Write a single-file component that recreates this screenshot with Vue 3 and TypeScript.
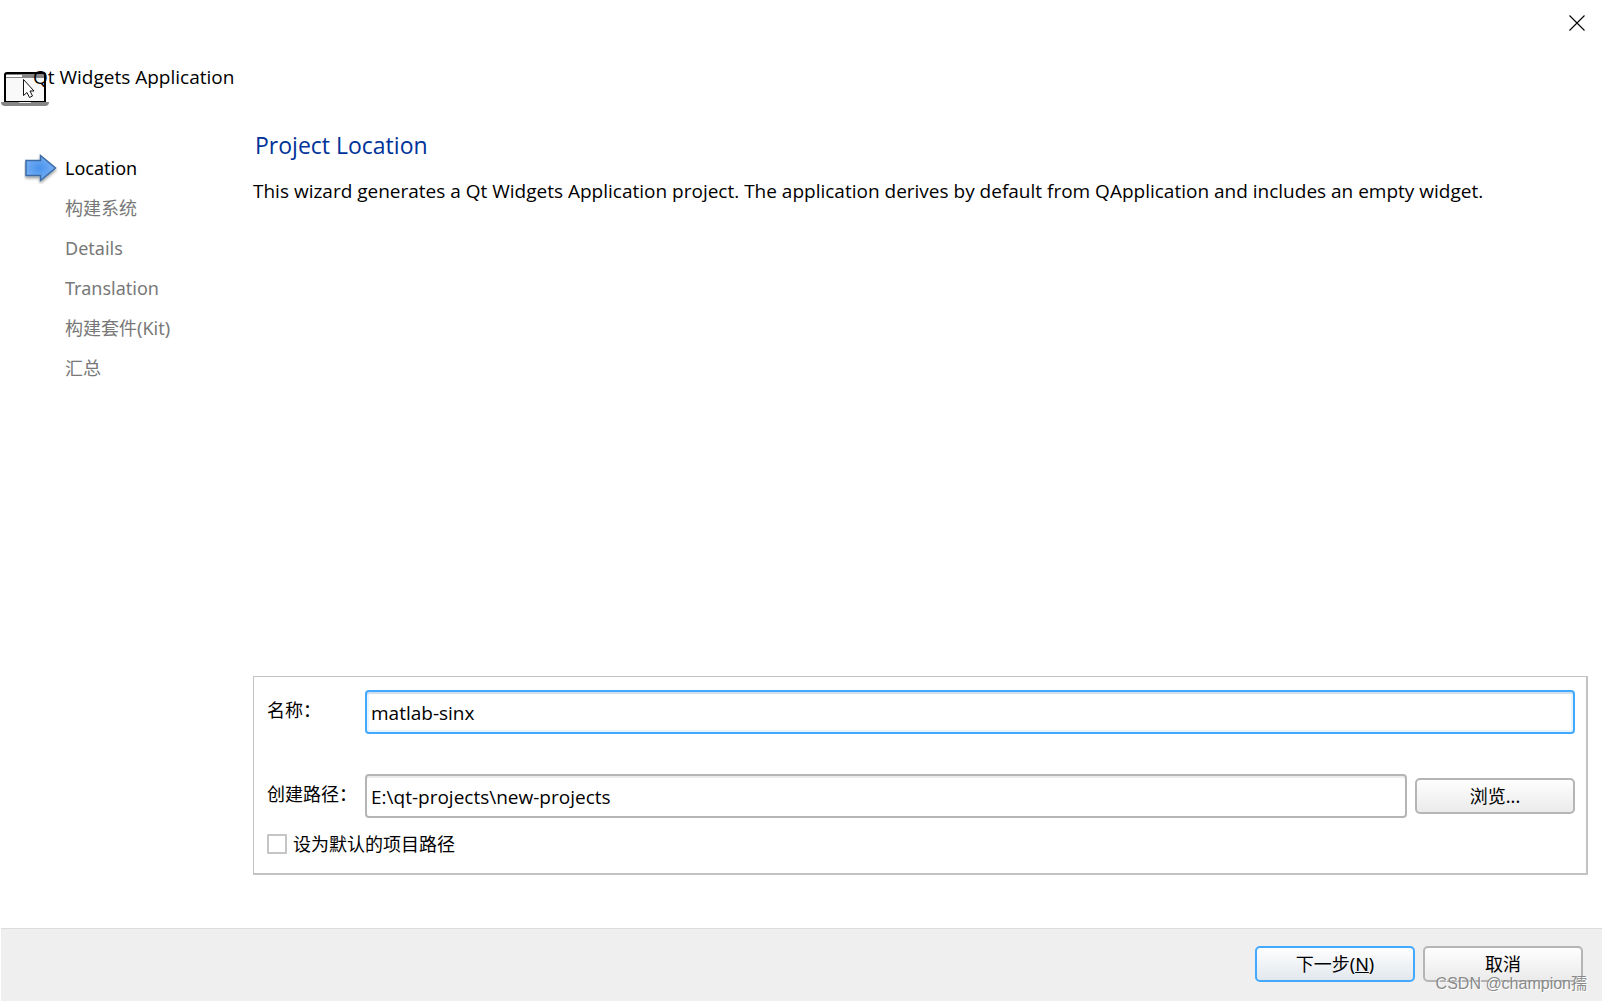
<script setup lang="ts">
import { ref } from 'vue'

const steps: string[] = ['Location', '构建系统', 'Details', 'Translation', '构建套件(Kit)', '汇总']
const currentStep = ref(0)
const projectName = ref('matlab-sinx')
const projectPath = ref('E:\\qt-projects\\new-projects')
const useAsDefault = ref(false)
</script>

<template>
  <form class="wizard" @submit.prevent>
    <header class="titlebar">
      <div class="brand">
        <svg class="brand-icon" width="48" height="34" viewBox="0 0 48 34" aria-hidden="true">
          <rect x="3" y="1" width="42" height="30" rx="2" fill="#f9f9f9" />
          <rect x="4" y="2" width="40" height="4" fill="#868686" />
          <rect x="5" y="3" width="16" height="2" fill="#fff" />
          <path d="M4 30V3q0-2 2-2h36q2 0 2 2v27" fill="none" stroke="#000" stroke-width="2" />
          <path d="M0 30h18l1 1h10l1-1h18q0 4-4 4H4q-4 0-4-4z" fill="#868686" />
          <path d="M18 30h12l-1 1H19z" fill="#eee" />
          <path d="M3 29.500h42" stroke="#000" />
          <path d="M22.500 7.500v16l3.500-3 2.500 5 3-1.500-2.500-5h4z" fill="#fff" stroke="#111" stroke-width="1" />
        </svg>
        <h1 class="app-title latin">Qt Widgets Application</h1>
      </div>
      <button class="close" type="button" aria-label="Close">
        <svg width="16" height="16" viewBox="0 0 16 16" aria-hidden="true">
          <path d="M.5.5l15 15M15.500.5l-15 15" stroke="#000" stroke-width="1.100" />
        </svg>
      </button>
    </header>

    <div class="body">
      <ol class="steps">
        <li v-for="(step, i) in steps" :key="step" class="step" :class="{ current: i === currentStep }">
          <span class="marker">
            <svg v-if="i === currentStep" width="34" height="32" viewBox="0 0 34 32" aria-hidden="true">
              <defs>
                <radialGradient id="arrowFill" cx="0.45" cy="0.5" r="0.6">
                  <stop offset="0" stop-color="#4a93ee" />
                  <stop offset="1" stop-color="#7db4f5" />
                </radialGradient>
                <filter id="arrowShadow" x="-20%" y="-20%" width="140%" height="150%">
                  <feDropShadow dx="0" dy="2" stdDeviation="1.500" flood-color="#000" flood-opacity="0.4" />
                </filter>
              </defs>
              <path
                d="M2 8.500h14.500V3.500L31.500 16 16.500 28.500v-5H2z"
                fill="url(#arrowFill)"
                stroke="#3a6ba5"
                stroke-width="1.500"
                filter="url(#arrowShadow)"
              />
            </svg>
          </span>
          <span>{{ step }}</span>
        </li>
      </ol>

      <main class="page">
        <h2 class="page-title">Project Location</h2>
        <p class="intro latin">
          This wizard generates a Qt Widgets Application project. The application derives by default from QApplication
          and includes an empty widget.
        </p>

        <section class="panel">
          <div class="row">
            <label class="label" for="name">名称：</label>
            <input id="name" v-model="projectName" class="field latin active" type="text" />
          </div>
          <div class="row">
            <label class="label" for="path">创建路径：</label>
            <input id="path" v-model="projectPath" class="field latin" type="text" />
            <button class="btn" type="button">浏览...</button>
          </div>
          <label class="check">
            <input v-model="useAsDefault" type="checkbox" />
            <span>设为默认的项目路径</span>
          </label>
        </section>
      </main>
    </div>

    <footer class="footer">
      <button class="btn primary" type="submit">下一步(<u>N</u>)</button>
      <button class="btn" type="button">取消</button>
      <span class="watermark">CSDN @champion孺</span>
    </footer>
  </form>
</template>

<style>
body {
  margin: 0;
  background: #fff;
}
</style>

<style scoped>
.wizard,
.wizard * {
  box-sizing: border-box;
}

.wizard {
  display: flex;
  flex-direction: column;
  min-height: 100vh;
  color: #000;
  font-family: 'Noto Sans', 'Noto Sans CJK SC', sans-serif;
  font-size: 18px;
  font-weight: 400;
  line-height: 24px;
}

.titlebar {
  display: flex;
  justify-content: space-between;
  align-items: flex-start;
  height: 131px;
  padding: 0 17px 0 1px;
}

.brand {
  display: flex;
  align-items: flex-start;
  padding-top: 65px;
}

.brand-icon {
  margin: 7px -16px 0 0;
}

.app-title {
  margin: 0;
  font-weight: 400;
}

.close {
  display: flex;
  margin-top: 15px;
  padding: 0;
  border: 0;
  background: none;
}

.body {
  display: flex;
  flex: 1;
  padding-right: 14px;
}

.steps {
  flex: none;
  width: 253px;
  margin: 0;
  padding: 17px 0 0 24px;
  list-style: none;
}

.step {
  display: flex;
  align-items: center;
  height: 40px;
  color: #787878;
}

.step.current {
  color: #000;
}

.marker {
  display: flex;
  width: 41px;
}

.page {
  display: flex;
  flex: 1;
  flex-direction: column;
  min-width: 0;
  padding-bottom: 53px;
}

.page-title {
  margin: 0 0 0 2px;
  color: #003399;
  font-family: 'Open Sans', sans-serif;
  font-size: 23px;
  font-weight: 400;
  line-height: 28px;
}

.intro {
  margin: 20px 0 0;
}

.panel {
  display: flex;
  flex-direction: column;
  margin-top: auto;
  padding: 13px 11px 17px 13px;
  border: solid #c3c3c3;
  border-width: 1px 2px 2px 1px;
}

.row {
  display: flex;
  align-items: center;
  gap: 8px;
  margin-bottom: 40px;
}

.row + .row {
  margin-bottom: 14px;
}

.label {
  flex: none;
  width: 90px;
  padding-bottom: 4px;
}

.field {
  flex: 1;
  min-width: 0;
  height: 44px;
  padding: 2px 4px 0;
  border: 2px solid #b5b5b5;
  border-radius: 4px;
  outline: 0;
  background: #fff;
  box-shadow: inset 0 2px #ececec;
  color: #000;
  font: inherit;
}

.field.active {
  border-color: #42a9ff;
  box-shadow:
    inset 0 2px #d2e0ed,
    inset 0 0 0 2px #e8f4ff;
}

.latin {
  font-family: 'Open Sans', 'Noto Sans CJK SC', sans-serif;
  font-size: 19px;
}

.btn {
  flex: none;
  width: 160px;
  height: 36px;
  padding: 0;
  border: 2px solid #b5b5b5;
  border-radius: 5px;
  background: linear-gradient(#fefefe, #ebebeb);
  color: #000;
  font: inherit;
}

.btn.primary {
  border-color: #42a9ff;
  background: linear-gradient(#fefefe, #e2e8ee);
}

.check {
  display: flex;
  align-items: center;
  align-self: flex-start;
  gap: 6px;
}

.check input {
  appearance: none;
  width: 20px;
  height: 20px;
  margin: 0;
  border: 2px solid #c5c5c5;
  border-radius: 1px;
  background: #fff;
}

.check input:checked {
  background: #42a9ff;
}

.footer {
  position: relative;
  display: flex;
  justify-content: flex-end;
  gap: 8px;
  margin-left: 1px;
  padding: 17px 19px 19px;
  border-top: 1px solid #dcdcdc;
  background: #efefef;
}

.watermark {
  position: absolute;
  right: 15px;
  bottom: 5px;
  color: #8a8a8a;
  font-family: 'Liberation Sans', 'Noto Sans CJK SC', sans-serif;
  font-size: 16px;
  text-shadow: 1px 1px #fff;
  white-space: nowrap;
  pointer-events: none;
}
</style>
